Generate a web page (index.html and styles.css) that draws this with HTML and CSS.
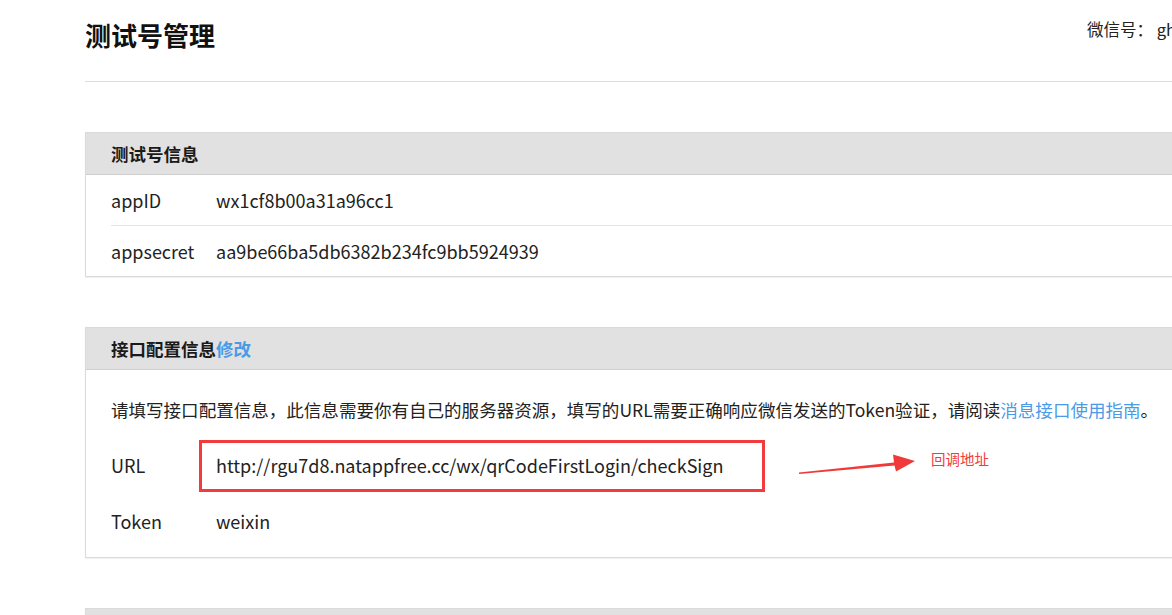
FILE: index.html
```html
<!DOCTYPE html>
<html lang="zh-CN">
<head>
<meta charset="utf-8">
<title>测试号管理</title>
<link rel="stylesheet" href="styles.css">
</head>
<body>
<div class="page">
  <header class="top">
    <h1 class="title">测试号管理</h1>
    <div class="account">微信号： gh_test</div>
  </header>

  <section class="panel">
    <div class="panel-head">测试号信息</div>
    <div class="panel-body">
      <div class="kv sep"><span class="k">appID</span><span class="v">wx1cf8b00a31a96cc1</span></div>
      <div class="kv"><span class="k">appsecret</span><span class="v">aa9be66ba5db6382b234fc9bb5924939</span></div>
    </div>
  </section>

  <section class="panel">
    <div class="panel-head">接口配置信息<a class="link">修改</a></div>
    <div class="panel-body cfg">
      <p class="desc">请填写接口配置信息，此信息需要你有自己的服务器资源，填写的URL需要正确响应微信发送的Token验证，请阅读<a class="link">消息接口使用指南</a>。</p>
      <div class="kv url-row">
        <span class="k">URL</span><span class="v">http://rgu7d8.natappfree.cc/wx/qrCodeFirstLogin/checkSign</span>
        <div class="mark-box"></div>
        <svg class="mark-arrow" width="120" height="30" viewBox="0 0 120 30"><polygon points="1,23.5 96,13.5 95,5.5 117,12 98,22.5 96.5,16.5 1,25" fill="#f03a3a"/></svg>
        <span class="mark-text">回调地址</span>
      </div>
      <div class="kv token-row"><span class="k">Token</span><span class="v">weixin</span></div>
    </div>
  </section>

  <section class="panel">
    <div class="panel-head">&nbsp;</div>
  </section>
</div>
</body>
</html>
```

FILE: styles.css
```css
html, body {
  margin: 0;
  padding: 0;
  background: #fff;
  overflow: hidden;
}
body {
  font-family: "Microsoft YaHei", "Noto Sans CJK SC", sans-serif;
  color: #222;
}
.page {
  width: 1300px;
  padding-left: 85px;
}
.top {
  display: grid;
  grid-template-columns: 1002px auto;
  height: 81px;
  border-bottom: 1px solid #dcdcdc;
}
.title {
  margin: 0;
  padding-top: 17px;
  font-size: 26px;
  line-height: 36px;
  font-weight: bold;
  color: #111;
}
.account {
  padding-top: 16px;
  font-size: 16.5px;
  line-height: 26px;
  color: #222;
  white-space: nowrap;
}
.panel {
  margin-top: 50px;
  border: 1px solid #dadada;
  border-right: none;
  box-shadow: 0 1px 1px rgba(0,0,0,0.05);
}
.panel-head {
  height: 41px;
  line-height: 41px;
  background: #e1e1e1;
  border-bottom: 1px solid #cfcfcf;
  padding-left: 25px;
  font-size: 17.5px;
  font-weight: bold;
  color: #1a1a1a;
}
.link {
  color: #4a9ae8;
  text-decoration: none;
}
.panel-head .link {
  font-weight: bold;
}
.panel-body {
  padding-left: 25px;
}
.kv {
  display: flex;
  align-items: center;
  height: 50px;
  font-size: 18px;
}
.kv.sep {
  border-bottom: 1px solid #e4e4e4;
}
.k {
  width: 105px;
  flex: none;
}
.v {
  white-space: nowrap;
}
.cfg {
  padding-top: 14px;
  padding-bottom: 9px;
}
.desc {
  margin: 0;
  font-size: 17.55px;
  line-height: 52px;
  white-space: nowrap;
}
.url-row {
  position: relative;
  height: 58px;
}
.token-row {
  height: 54px;
}
.mark-box {
  position: absolute;
  left: 88px;
  top: 4px;
  width: 560px;
  height: 46px;
  border: 3px solid #f23c3c;
}
.mark-arrow {
  position: absolute;
  left: 687px;
  top: 13px;
}
.mark-text {
  position: absolute;
  left: 820px;
  top: 13px;
  font-size: 14.5px;
  line-height: 20px;
  color: #f23c3c;
  white-space: nowrap;
}
```
